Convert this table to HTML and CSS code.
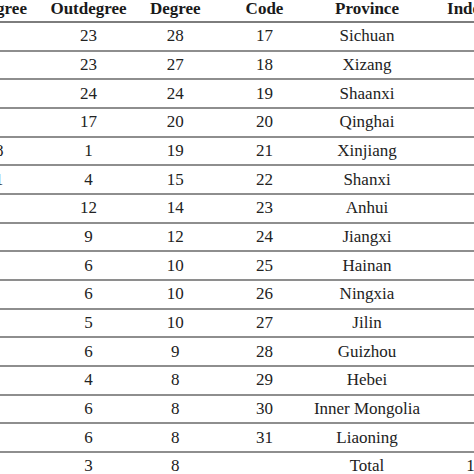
FILE: index.html
```html
<!DOCTYPE html>
<html lang="en">
<head>
<meta charset="utf-8">
<title>Province degree table</title>
<link rel="stylesheet" href="styles.css">
</head>
<body>
<div class="crop">
<table class="degrees">
<colgroup>
<col class="c-in"><col class="c-out"><col class="c-deg"><col class="c-code"><col class="c-prov"><col class="c-in2">
</colgroup>
<thead>
<tr><th>Indegree</th><th>Outdegree</th><th>Degree</th><th>Code</th><th>Province</th><th>Indegree</th></tr>
</thead>
<tbody>
<tr><td>5</td><td>23</td><td>28</td><td>17</td><td>Sichuan</td><td>3</td></tr>
<tr><td>4</td><td>23</td><td>27</td><td>18</td><td>Xizang</td><td>2</td></tr>
<tr><td>0</td><td>24</td><td>24</td><td>19</td><td>Shaanxi</td><td>6</td></tr>
<tr><td>3</td><td>17</td><td>20</td><td>20</td><td>Qinghai</td><td>4</td></tr>
<tr><td>18</td><td>1</td><td>19</td><td>21</td><td>Xinjiang</td><td>5</td></tr>
<tr><td>11</td><td>4</td><td>15</td><td>22</td><td>Shanxi</td><td>7</td></tr>
<tr><td>2</td><td>12</td><td>14</td><td>23</td><td>Anhui</td><td>6</td></tr>
<tr><td>3</td><td>9</td><td>12</td><td>24</td><td>Jiangxi</td><td>5</td></tr>
<tr><td>4</td><td>6</td><td>10</td><td>25</td><td>Hainan</td><td>3</td></tr>
<tr><td>4</td><td>6</td><td>10</td><td>26</td><td>Ningxia</td><td>4</td></tr>
<tr><td>5</td><td>5</td><td>10</td><td>27</td><td>Jilin</td><td>6</td></tr>
<tr><td>3</td><td>6</td><td>9</td><td>28</td><td>Guizhou</td><td>5</td></tr>
<tr><td>4</td><td>4</td><td>8</td><td>29</td><td>Hebei</td><td>4</td></tr>
<tr><td>2</td><td>6</td><td>8</td><td>30</td><td>Inner Mongolia</td><td>3</td></tr>
<tr><td>2</td><td>6</td><td>8</td><td>31</td><td>Liaoning</td><td>4</td></tr>
<tr><td>5</td><td>3</td><td>8</td><td></td><td>Total</td><td>178</td></tr>
</tbody>
</table>
</div>
</body>
</html>
```
FILE: styles.css
```css
html, body {
  margin: 0;
  padding: 0;
  background: #ffffff;
}

.crop {
  width: 474px;
  height: 474px;
  overflow: hidden;
}

.degrees {
  border-collapse: collapse;
  table-layout: fixed;
  width: 589.5px;
  margin-left: -53.5px;
  margin-top: -3px;
  font-family: "Liberation Serif", "DejaVu Serif", serif;
  font-size: 17px;
  color: #222222;
}

.c-in { width: 97px; }
.c-out { width: 90px; }
.c-deg { width: 83.5px; }
.c-code { width: 95px; }
.c-prov { width: 110px; }
.c-in2 { width: 114px; }

.degrees th,
.degrees td {
  padding: 0;
  text-align: center;
  white-space: nowrap;
}

.degrees th {
  height: 24px;
  font-weight: bold;
  color: #1a1a1a;
  border-bottom: 2px solid #7d7d7d;
}

.degrees td {
  height: 26.67px;
  border-bottom: 2px solid #8e8e8e;
}

.degrees tbody tr:last-child td {
  border-bottom: none;
}
```
